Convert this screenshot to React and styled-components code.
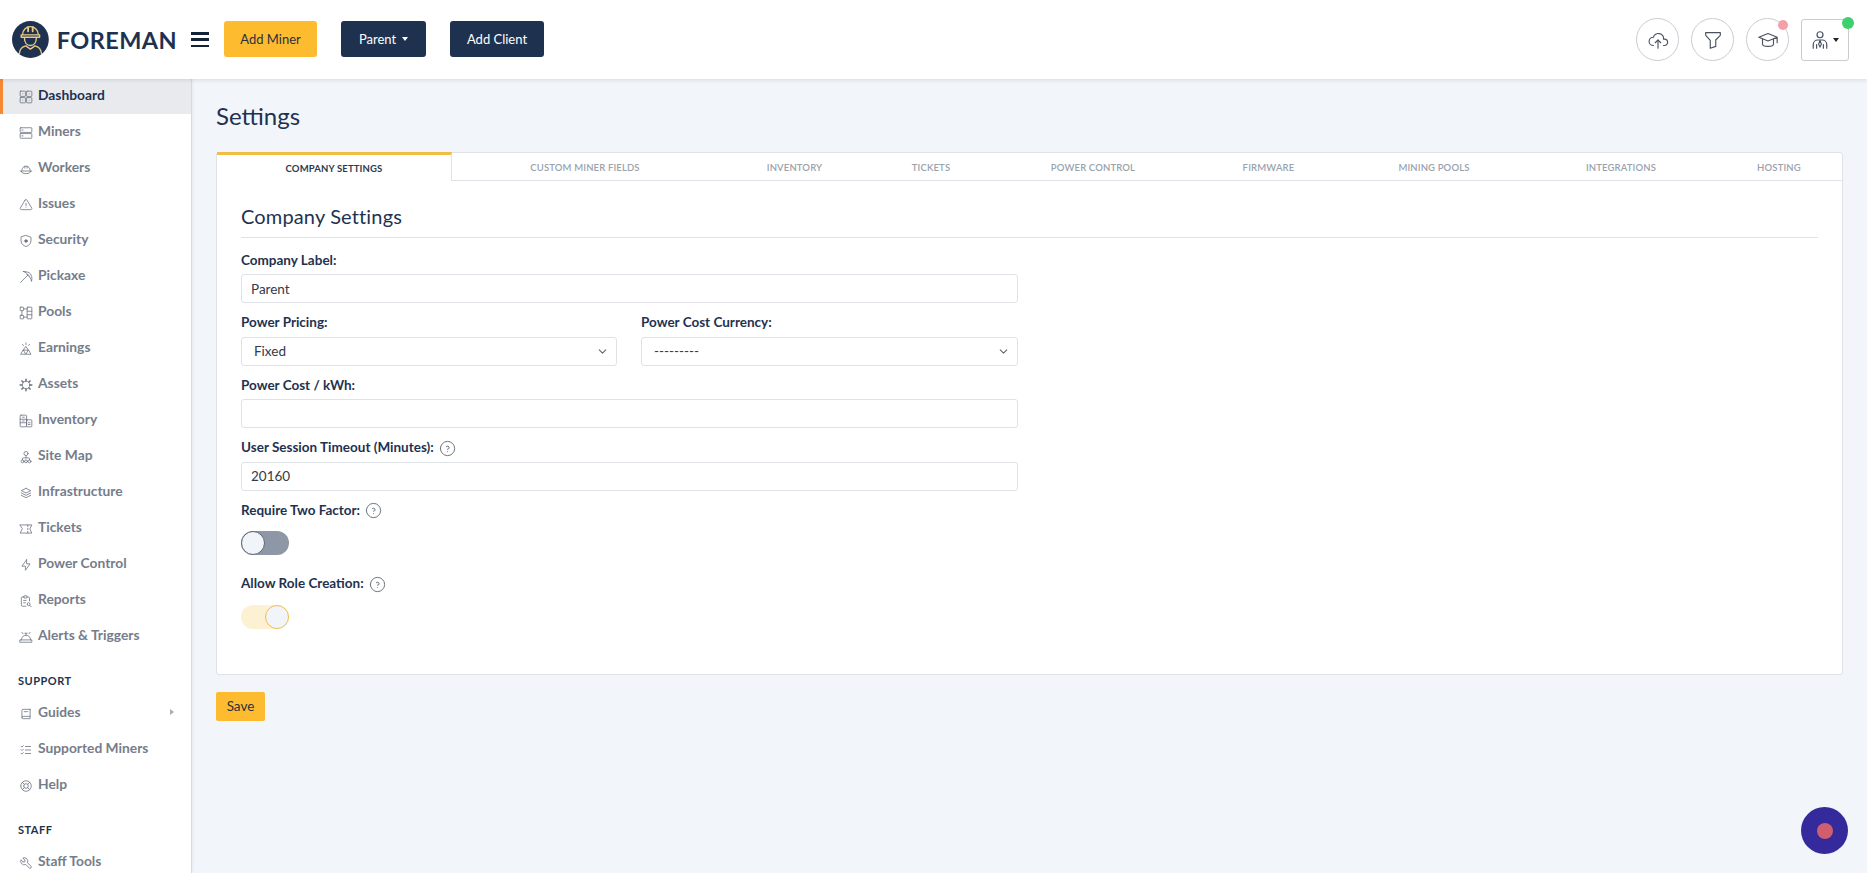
import React from "react";
import styled, { createGlobalStyle } from "styled-components";
import {
  TbCloudUpload,
  TbFilter,
  TbSchool,
  TbAlertTriangle,
  TbStack2,
  TbBolt,
  TbReportSearch,
  TbBook2,
  TbListCheck,
  TbLifebuoy,
  TbTool,
  TbHelpCircle,
  TbChevronDown,
} from "react-icons/tb";

const FONT = `"Lato", "Noto Sans", sans-serif`;
const NAVY = "#1e3250";
const YELLOW = "#fdbc30";

const GlobalStyle = createGlobalStyle`
  html, body { margin: 0; padding: 0; height: 100%; overflow: hidden; }
  body { font-family: ${FONT}; background: #f2f5fa; color: ${NAVY}; }
  * { box-sizing: border-box; }
`;

const Page = styled.div`
  height: 100vh;
  display: flex;
  flex-direction: column;
  overflow: hidden;
`;

const TopBar = styled.header`
  position: relative;
  z-index: 2;
  height: 79px;
  flex: none;
  display: flex;
  align-items: center;
  padding: 0 18px 0 12px;
  background: #fff;
  box-shadow: 0 1px 4px rgba(30, 50, 80, 0.14);
`;

const Brand = styled.div`
  display: flex;
  align-items: center;
  gap: 8px;
  width: 165px;
`;

const BrandName = styled.span`
  font-size: 23.5px;
  font-weight: 700;
  letter-spacing: 0.4px;
  color: ${NAVY};
`;

const Burger = styled.button`
  width: 18px;
  height: 15px;
  margin: 0 15px 0 14px;
  padding: 0;
  border: 0;
  background: none;
  display: flex;
  flex-direction: column;
  justify-content: space-between;
  & > i {
    display: block;
    height: 2.5px;
    background: #15233a;
  }
`;

const TopButton = styled.button`
  height: 36px;
  width: ${(p) => p.$w}px;
  margin: 0 ${(p) => p.$mr || 0}px 1px 0;
  border: 0;
  border-radius: 3px;
  font-family: ${FONT};
  font-size: 13px;
  color: ${(p) => (p.$dark ? "#fff" : "#2a3040")};
  background: ${(p) => (p.$dark ? NAVY : YELLOW)};
  display: flex;
  align-items: center;
  justify-content: center;
  gap: 6px;
`;

const Caret = styled.i`
  width: 0;
  height: 0;
  border-left: 3.5px solid transparent;
  border-right: 3.5px solid transparent;
  border-top: 4px solid ${(p) => p.$color || "#fff"};
`;

const TopRight = styled.div`
  margin-left: auto;
  display: flex;
  align-items: center;
  gap: 12px;
`;

const RoundButton = styled.div`
  position: relative;
  width: 43px;
  height: 43px;
  border: 1px solid #c9cccf;
  border-radius: 50%;
  display: flex;
  align-items: center;
  justify-content: center;
  color: #4a5260;
  font-size: 22px;
  & > svg {
    stroke-width: 1.25;
  }
`;

const UserBox = styled.div`
  position: relative;
  width: 48px;
  height: 42px;
  border: 1px solid #c9cccf;
  border-radius: 3px;
  display: flex;
  align-items: center;
  justify-content: center;
  gap: 4px;
  color: #4a5260;
`;

const Dot = styled.span`
  position: absolute;
  width: ${(p) => p.$size}px;
  height: ${(p) => p.$size}px;
  right: ${(p) => p.$right}px;
  top: ${(p) => p.$top}px;
  border-radius: 50%;
  background: ${(p) => p.$color};
`;

const Body = styled.div`
  flex: 1;
  min-height: 0;
  display: flex;
`;

const Sidebar = styled.nav`
  width: 192px;
  flex: none;
  background: #fff;
  border-right: 1px solid #d5d9e0;
  box-shadow: 1px 0 2px rgba(30, 50, 80, 0.06);
  margin-top: -1px;
  overflow: hidden;
`;

const NavRow = styled.a`
  position: relative;
  height: 36px;
  display: flex;
  align-items: center;
  gap: 5px;
  padding: 0 12px 3px 16px;
  font-size: 13.8px;
  font-weight: 700;
  color: ${(p) => (p.$active ? NAVY : "#757d8b")};
  background: ${(p) => (p.$active ? "#e8eaee" : "transparent")};
  border-left: 3px solid ${(p) => (p.$active ? "#f58a33" : "transparent")};
  & > svg {
    flex: none;
    width: 14px;
    height: 14px;
    margin-top: 4px;
    color: #6b7280;
    stroke-width: 1.35;
  }
`;

const SubArrow = styled.i`
  margin-left: auto;
  margin-right: 5px;
  width: 0;
  height: 0;
  border-top: 3px solid transparent;
  border-bottom: 3px solid transparent;
  border-left: 4px solid #a8adb6;
`;

const NavSection = styled.div`
  padding: 20px 0 7px 18px;
  height: 41px;
  font-size: 11px;
  line-height: 14px;
  font-weight: 700;
  letter-spacing: 0.5px;
  color: ${NAVY};
`;

const Main = styled.main`
  flex: 1;
  min-width: 0;
  padding: 22px 24px 0;
`;

const Title = styled.h1`
  margin: 0 0 21px;
  height: 30px;
  font-size: 24px;
  line-height: 30px;
  font-weight: 400;
  color: ${NAVY};
`;

const Card = styled.section`
  background: #fff;
  border: 1px solid #dfe3e8;
  border-radius: 3px;
  height: 523px;
`;

const TabBar = styled.div`
  display: grid;
  grid-template-columns: 235px 266px 153px 120px 204px 147px 184px 190px 1fr;
  height: 28px;
`;

const Tab = styled.div`
  display: flex;
  align-items: center;
  justify-content: center;
  margin-top: -1px;
  height: 29px;
  padding-top: ${(p) => (p.$active ? 0 : 2)}px;
  font-size: 9.5px;
  font-weight: ${(p) => (p.$active ? 700 : 600)};
  letter-spacing: 0.15px;
  white-space: nowrap;
  color: ${(p) => (p.$active ? "#2d3a4d" : "#9aa2ad")};
  border-top: ${(p) => (p.$active ? `3px solid #f2bd45` : "0")};
  border-right: ${(p) => (p.$active ? "1px solid #dfe3e8" : "0")};
  border-bottom: ${(p) => (p.$active ? "0" : "1px solid #dfe3e8")};
`;

const CardBody = styled.div`
  padding: 22px 24px 0;
`;

const SectionHeading = styled.h2`
  margin: 0 0 14px;
  padding-bottom: 9px;
  height: 35px;
  font-size: 20px;
  line-height: 26px;
  font-weight: 400;
  letter-spacing: 0.15px;
  color: ${NAVY};
  border-bottom: 1px solid #dfe3e8;
`;

const Form = styled.form`
  width: 777px;
  display: grid;
  grid-template-columns: 376px 1fr;
  column-gap: 24px;
  row-gap: 11.5px;
`;

const Field = styled.div`
  grid-column: ${(p) => (p.$half ? "auto" : "1 / -1")};
  margin-top: ${(p) => p.$mt || 0}px;
  display: flex;
  flex-direction: column;
  gap: ${(p) => p.$gap || 5}px;
`;

const Label = styled.label`
  display: flex;
  align-items: center;
  gap: 4px;
  height: 17px;
  padding-bottom: 2px;
  font-size: 13.5px;
  font-weight: 700;
  color: ${NAVY};
  & > svg {
    width: 19px;
    height: 19px;
    margin-top: 2px;
    color: #666e7a;
    stroke-width: 1.2;
  }
`;

const Input = styled.input`
  height: 29px;
  width: 100%;
  padding: 0 9px;
  border: 1px solid #dfe3e8;
  border-radius: 3px;
  outline: 0;
  background: #fff;
  font-family: ${FONT};
  font-size: 13.5px;
  color: #343a46;
`;

const SelectWrap = styled.div`
  position: relative;
  & > svg {
    position: absolute;
    right: 8px;
    top: 8px;
    width: 13px;
    height: 13px;
    color: #5e6673;
    pointer-events: none;
  }
`;

const Select = styled.select`
  appearance: none;
  height: 29px;
  width: 100%;
  padding: 0 12px;
  border: 1px solid #dfe3e8;
  border-radius: 3px;
  outline: 0;
  background: #fff;
  font-family: ${FONT};
  font-size: 13.5px;
  color: #343a46;
`;

const ToggleTrack = styled.div`
  width: 48px;
  height: 24px;
  border-radius: 12px;
  display: flex;
  justify-content: ${(p) => (p.$on ? "flex-end" : "flex-start")};
  background: ${(p) => (p.$on ? "#fdf1d3" : "#8d97a6")};
`;

const ToggleKnob = styled.div`
  width: 24px;
  height: 24px;
  border-radius: 50%;
  background: #f1f4f9;
  border: 1px solid ${(p) => (p.$on ? "#efc04a" : "#5d6675")};
`;

const SaveButton = styled.button`
  display: block;
  margin-top: 17px;
  width: 49px;
  height: 29px;
  padding: 0 0 2px;
  border: 0;
  border-radius: 2px;
  background: ${YELLOW};
  font-family: ${FONT};
  font-size: 13.5px;
  color: #2a3040;
`;

const ChatBubble = styled.div`
  position: fixed;
  left: 1801px;
  top: 807px;
  width: 47px;
  height: 47px;
  border-radius: 50%;
  background: #342a9c;
  display: flex;
  align-items: center;
  justify-content: center;
  & > i {
    width: 16px;
    height: 16px;
    border-radius: 50%;
    background: #cf5f6e;
  }
`;

const Glyph = ({ children }) => (
  <svg viewBox="0 0 24 24" fill="none" stroke="currentColor" strokeWidth="1.6" strokeLinecap="round" strokeLinejoin="round">
    {children}
  </svg>
);

const DashboardIcon = () => (
  <Glyph>
    <rect x="2" y="2" width="9" height="9" rx="1" />
    <rect x="13" y="2" width="9" height="9" rx="1" />
    <rect x="2" y="13" width="9" height="9" rx="1" />
    <rect x="13" y="13" width="9" height="9" rx="1" />
    <path d="M6.500 6.500h.01M17.500 6.500h.01M6.500 17.500h.01M17.500 17.500h.01" />
  </Glyph>
);

const MinersIcon = () => (
  <Glyph>
    <rect x="2" y="3" width="20" height="8" rx="1" />
    <rect x="2" y="13" width="20" height="8" rx="1" />
    <path d="M5 7h2M5 17h2" />
  </Glyph>
);

const HelmetIcon = () => (
  <Glyph>
    <path d="M5 14a7 7 0 0 1 14 0" />
    <path d="M2 15.500h20M4 15.500c0 3 3 4.500 8 4.500s8-1.500 8-4.500" />
    <path d="M10 7.500v3M14 7.500v3" />
  </Glyph>
);

const ShieldDotIcon = () => (
  <Glyph>
    <path d="M12 2.500l8.500 3v6.500c0 5-4 8-8.500 9.500C7.500 20 3.500 17 3.500 12V5.500z" />
    <circle cx="12" cy="12" r="2.200" fill="currentColor" />
  </Glyph>
);

const PickaxeIcon = () => (
  <Glyph>
    <path d="M2.500 21.500L15 9" />
    <path d="M13 7l4 4" />
    <path d="M7.500 2.500c5.500 0 10 1.500 12 4s3.500 6.500 2 13c-1-4-3-8-5-10.500S12 4 7.500 2.500z" />
  </Glyph>
);

const PoolsIcon = () => (
  <Glyph>
    <rect x="2" y="2" width="6" height="6" rx="1" />
    <rect x="2" y="16" width="6" height="6" rx="1" />
    <rect x="14" y="2" width="8" height="20" rx="1" />
    <path d="M8 5h6M8 19h6M5 8v8M14 9h8M14 15h8" />
  </Glyph>
);

const EarningsIcon = () => (
  <Glyph>
    <path d="M12 8l4 6H8zM7.500 14l4 7h-8zM16.500 14l4 7h-8z" />
    <path d="M12 1.500v3M6 4l1.500 2M18 4l-1.500 2" />
  </Glyph>
);

const AssetsIcon = () => (
  <Glyph>
    <circle cx="12" cy="12" r="6.500" />
    <path d="M12 2v3M12 19v3M2 12h3M19 12h3M5 5l2 2M17 17l2 2M19 5l-2 2M7 17l-2 2" strokeWidth="2.600" />
  </Glyph>
);

const InventoryIcon = () => (
  <Glyph>
    <rect x="2" y="2" width="11" height="20" rx="1.500" />
    <rect x="13" y="10" width="9" height="12" rx="1" />
    <path d="M2 9h11M2 15h11M6 5.500h3M6 12h3M16 15h3M16 18h3" />
  </Glyph>
);

const SiteMapIcon = () => (
  <Glyph>
    <circle cx="12" cy="6" r="3.500" />
    <path d="M12 9.500v4M6 17v-2.500a1 1 0 0 1 1-1h10a1 1 0 0 1 1 1V17" />
    <circle cx="6" cy="19.500" r="2.500" />
    <circle cx="18" cy="19.500" r="2.500" />
    <circle cx="12" cy="19.500" r="2.500" />
  </Glyph>
);

const TicketIcon = () => (
  <Glyph>
    <path d="M2 5h20l-3.500 7 3.500 7H2l3.500-7z" />
    <path d="M15 5v3M15 11v2M15 16v3" />
  </Glyph>
);

const BellIcon = () => (
  <Glyph>
    <path d="M4 17a8 8 0 0 1 16 0" />
    <path d="M2 17h20v4H2zM12 9V6M10 5.500h4M5 4l2 2.500M19 4l-2 2.500" />
  </Glyph>
);

const UserTieIcon = () => (
  <svg width="18" height="20" viewBox="0 0 24 26" fill="none" stroke="currentColor" strokeWidth="1.6" strokeLinecap="round" strokeLinejoin="round">
    <circle cx="12" cy="6" r="4" />
    <path d="M3 24v-5a6 6 0 0 1 6-6h6a6 6 0 0 1 6 6v5M7.500 24v-5M16.500 24v-5" />
    <path d="M12 13.500l-1.800 5 1.800 4 1.800-4z" />
  </svg>
);

const Logo = () => (
  <svg width="39" height="39" viewBox="0 0 40 40" fill="none" stroke="#e9c983" strokeWidth="1.500" strokeLinecap="round" strokeLinejoin="round">
    <circle cx="20" cy="20" r="20" fill="#1e3250" stroke="none" />
    <path d="M11.500 14.500a8.500 8.500 0 0 1 17 0" />
    <path d="M10 15h20v2.500H10z" />
    <path d="M17.500 6.500v4.500M22.500 6.500v4.500" strokeWidth="2" />
    <path d="M13.500 18c0 5 2.500 8.500 6.500 8.500s6.500-3.500 6.500-8.500" />
    <path d="M8 35c.5-4.500 3-7 7-8l5 3.500 5-3.500c4 1 6.500 3.500 7 8" />
  </svg>
);

const MAIN_NAV = [
  ["Dashboard", <DashboardIcon />],
  ["Miners", <MinersIcon />],
  ["Workers", <HelmetIcon />],
  ["Issues", <TbAlertTriangle />],
  ["Security", <ShieldDotIcon />],
  ["Pickaxe", <PickaxeIcon />],
  ["Pools", <PoolsIcon />],
  ["Earnings", <EarningsIcon />],
  ["Assets", <AssetsIcon />],
  ["Inventory", <InventoryIcon />],
  ["Site Map", <SiteMapIcon />],
  ["Infrastructure", <TbStack2 />],
  ["Tickets", <TicketIcon />],
  ["Power Control", <TbBolt />],
  ["Reports", <TbReportSearch />],
  ["Alerts & Triggers", <BellIcon />],
];

const SUPPORT_NAV = [
  ["Guides", <TbBook2 />, true],
  ["Supported Miners", <TbListCheck />],
  ["Help", <TbLifebuoy />],
];

const TABS = [
  "Company Settings",
  "Custom Miner Fields",
  "Inventory",
  "Tickets",
  "Power Control",
  "Firmware",
  "Mining Pools",
  "Integrations",
  "Hosting",
];

const NavItem = ({ label, icon, active, sub }) => (
  <NavRow $active={active}>
    {icon}
    {label}
    {sub && <SubArrow />}
  </NavRow>
);

export default function App() {
  return (
    <Page>
      <GlobalStyle />
      <TopBar>
        <Brand>
          <Logo />
          <BrandName>FOREMAN</BrandName>
        </Brand>
        <Burger type="button" aria-label="Menu">
          <i />
          <i />
          <i />
        </Burger>
        <TopButton $w={93} $mr={24}>Add Miner</TopButton>
        <TopButton $w={85} $mr={24} $dark>
          Parent <Caret />
        </TopButton>
        <TopButton $w={94} $dark>Add Client</TopButton>
        <TopRight>
          <RoundButton>
            <TbCloudUpload />
          </RoundButton>
          <RoundButton>
            <TbFilter />
          </RoundButton>
          <RoundButton>
            <TbSchool />
            <Dot $size={10} $right={0} $top={1} $color="#f4a0a8" />
          </RoundButton>
          <UserBox>
            <UserTieIcon />
            <Caret $color="#222" />
            <Dot $size={12} $right={-6} $top={-3} $color="#3ecf6e" />
          </UserBox>
        </TopRight>
      </TopBar>
      <Body>
        <Sidebar>
          {MAIN_NAV.map(([label, icon], i) => (
            <NavItem key={label} label={label} icon={icon} active={i === 0} />
          ))}
          <NavSection>SUPPORT</NavSection>
          {SUPPORT_NAV.map(([label, icon, sub]) => (
            <NavItem key={label} label={label} icon={icon} sub={sub} />
          ))}
          <NavSection>STAFF</NavSection>
          <NavItem label="Staff Tools" icon={<TbTool />} />
        </Sidebar>
        <Main>
          <Title>Settings</Title>
          <Card>
            <TabBar>
              {TABS.map((t, i) => (
                <Tab key={t} $active={i === 0}>
                  {t.toUpperCase()}
                </Tab>
              ))}
            </TabBar>
            <CardBody>
              <SectionHeading>Company Settings</SectionHeading>
              <Form>
                <Field>
                  <Label>Company Label:</Label>
                  <Input defaultValue="Parent" />
                </Field>
                <Field $half>
                  <Label>Power Pricing:</Label>
                  <SelectWrap>
                    <Select defaultValue="Fixed">
                      <option>Fixed</option>
                      <option>Variable</option>
                    </Select>
                    <TbChevronDown />
                  </SelectWrap>
                </Field>
                <Field $half>
                  <Label>Power Cost Currency:</Label>
                  <SelectWrap>
                    <Select defaultValue="---------">
                      <option>---------</option>
                      <option>USD</option>
                    </Select>
                    <TbChevronDown />
                  </SelectWrap>
                </Field>
                <Field>
                  <Label>Power Cost / kWh:</Label>
                  <Input />
                </Field>
                <Field>
                  <Label>
                    User Session Timeout (Minutes): <TbHelpCircle />
                  </Label>
                  <Input defaultValue="20160" />
                </Field>
                <Field $gap={12}>
                  <Label>
                    Require Two Factor: <TbHelpCircle />
                  </Label>
                  <ToggleTrack>
                    <ToggleKnob />
                  </ToggleTrack>
                </Field>
                <Field $gap={12} $mt={9}>
                  <Label>
                    Allow Role Creation: <TbHelpCircle />
                  </Label>
                  <ToggleTrack $on>
                    <ToggleKnob $on />
                  </ToggleTrack>
                </Field>
              </Form>
            </CardBody>
          </Card>
          <SaveButton>Save</SaveButton>
        </Main>
      </Body>
      <ChatBubble>
        <i />
      </ChatBubble>
    </Page>
  );
}
